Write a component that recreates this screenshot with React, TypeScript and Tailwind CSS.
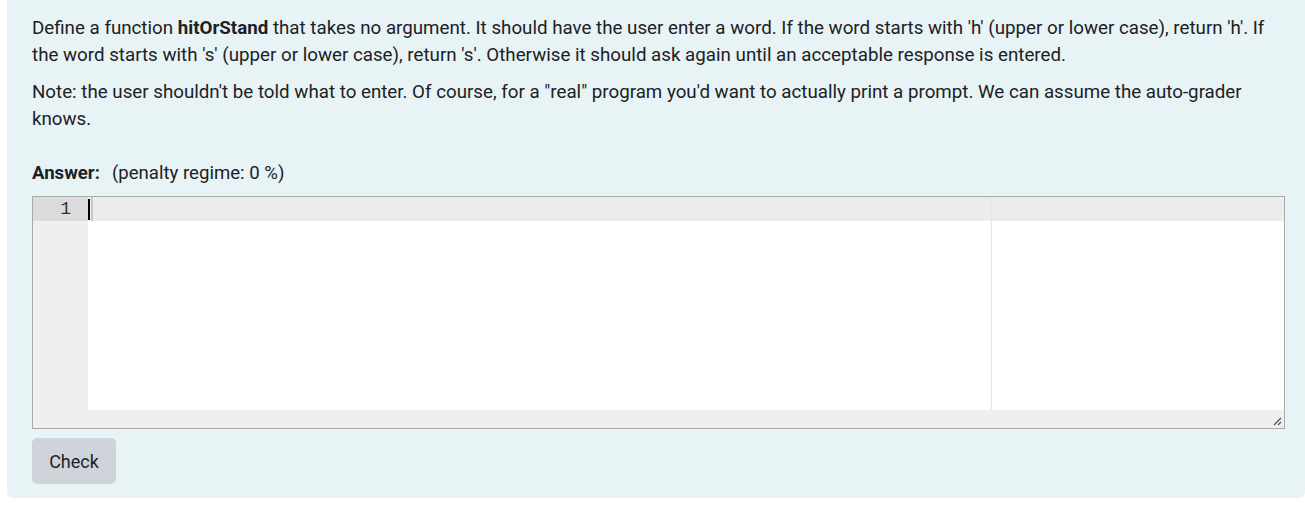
export default function App() {
  return (
    <div className="w-[1305px] h-[506px] bg-white font-['Roboto',sans-serif] text-[#1d2125]">
      <div className="ml-[7px] w-[1298px] rounded-b-md bg-[#e7f3f5] pl-[25px] pr-[20px] pt-[15px] pb-[14px]">
        {/* question text */}
        <div className="text-[18.74px] leading-[27px]">
          <p>
            Define a function <b>hitOrStand</b> that takes no argument. It should have the user enter a word. If the
            word starts with 'h' (upper or lower case), return 'h'. If the word starts with 's' (upper or lower case),
            return 's'. Otherwise it should ask again until an acceptable response is entered.
          </p>
          <p className="mt-[10px]">
            Note: the user shouldn't be told what to enter. Of course, for a "real" program you'd want to actually
            print a prompt. We can assume the auto-grader knows.
          </p>
        </div>

        {/* answer label */}
        <div className="mt-[28px] flex items-center gap-[12px] text-[18.6px] leading-[24px]">
          <span className="font-bold">Answer:</span>
          <span>(penalty regime: 0 %)</span>
        </div>

        {/* editor */}
        <div className="relative mt-[11px] h-[233px] border border-[#aaaaaa] bg-[#efefef]">
          <div className="flex h-[213px]">
            <div className="w-[55px] bg-[#efefef]">
              <div className="h-[24px] bg-[#dcdcdc] pr-[17px] text-right font-['Liberation_Mono',monospace] text-[18px] leading-[24px] text-[#333]">
                1
              </div>
            </div>
            <div className="relative flex-1 bg-white">
              <div className="h-[24px] bg-[#ececec]" />
              <div className="absolute left-0 top-[2px] h-[21px] w-[1.5px] bg-black" />
              <div className="absolute left-[3px] top-0 h-[24px] w-[2px] bg-[#c8c8c8]" />
              <div className="absolute left-[903px] top-0 h-full w-px bg-[#e6e6e6]" />
            </div>
          </div>
          {/* resize handle */}
          <svg className="absolute bottom-[2px] right-[2px]" width="10" height="10" viewBox="0 0 10 10">
            <path d="M9 2 L2 9 M9 6 L6 9" stroke="#555" strokeWidth="1.3" />
          </svg>
        </div>

        {/* check button */}
        <button className="mt-[9px] h-[46px] w-[84px] rounded-[5px] bg-[#ced4da] text-[18px] text-[#1d2125]">
          Check
        </button>
      </div>
    </div>
  );
}
